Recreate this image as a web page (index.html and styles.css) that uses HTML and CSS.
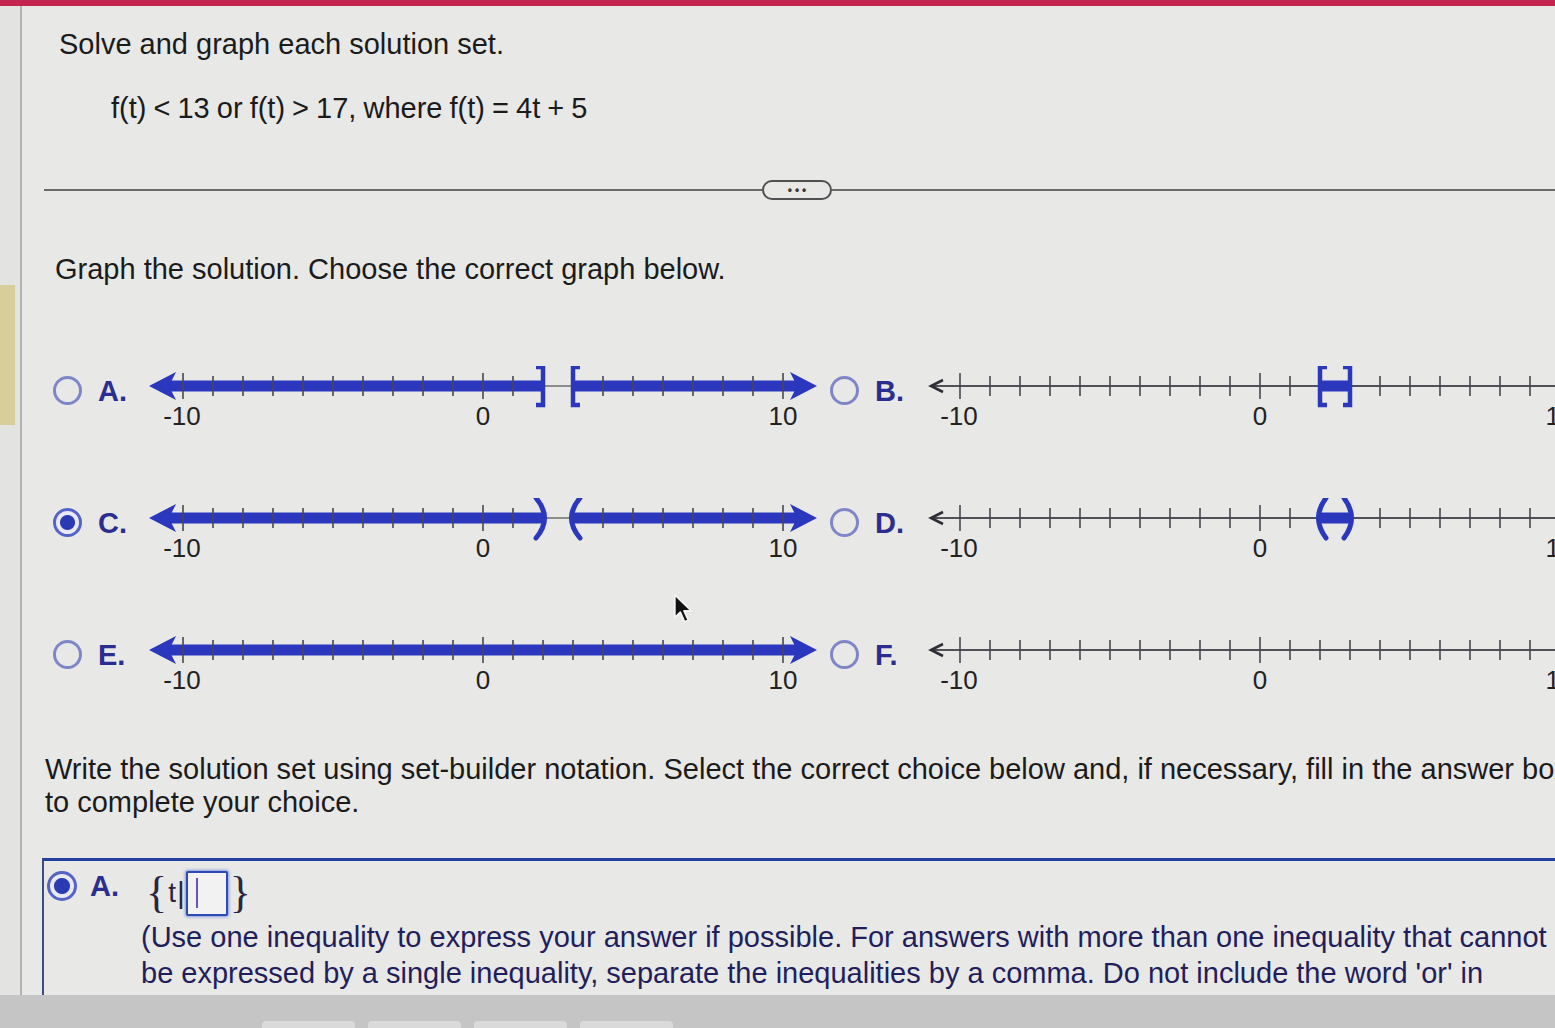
FILE: index.html
```html
<!DOCTYPE html>
<html lang="en">
<head>
<meta charset="utf-8">
<title>Solve and graph each solution set</title>
<link rel="stylesheet" href="styles.css">
</head>
<body>
<svg class="defs" aria-hidden="true">
  <defs>
    <path id="ticks" d="M38 7V33 M68 10V30 M98 10V30 M128 10V30 M158 10V30 M188 10V30 M218 10V30 M248 10V30 M278 10V30 M308 10V30 M338 7V33 M368 10V30 M398 10V30 M428 10V30 M458 10V30 M488 10V30 M518 10V30 M548 10V30 M578 10V30 M608 10V30 M638 7V33"/>
    <g id="labels">
      <text x="37" y="59" text-anchor="middle">-10</text>
      <text x="338" y="59" text-anchor="middle">0</text>
      <text x="638" y="59" text-anchor="middle">10</text>
    </g>
    <polygon id="barrow-l" points="4,20 31,6 24,20 31,34"/>
    <polygon id="barrow-r" points="672,20 645,6 652,20 645,34"/>
    <path id="thin-line" d="M9 20H690"/>
    <path id="thin-arrow" d="M21 14L9 20L21 26"/>
  </defs>
</svg>

<div class="topbar"></div>
<div class="page">
  <aside class="side"><div class="side-mark"></div></aside>
  <main class="content">
    <p class="prompt">Solve and graph each solution set.</p>
    <p class="equation">f(t) &lt; 13 or f(t) &gt; 17, where f(t) = 4t + 5</p>
    <div class="divider"><span class="rule rule-left"></span><span class="more">•••</span><span class="rule"></span></div>
    <p class="question">Graph the solution. Choose the correct graph below.</p>

    <div class="choices">
      <div class="choice">
        <span class="radio"></span><span class="letter">A.</span>
        <svg class="nl" width="700" height="64" viewBox="0 0 700 64">
          <rect class="blue" x="20" y="14.5" width="376" height="11"/>
          <path class="gap" d="M398 20H428"/>
          <rect class="blue" x="430" y="14.5" width="222" height="11"/>
          <use href="#barrow-l" class="blue"/>
          <use href="#barrow-r" class="blue"/>
          <use href="#ticks" class="tick"/>
          <path class="bracket" d="M391 1H398V39H391"/>
          <path class="bracket" d="M435 1H428V39H435"/>
          <use href="#labels" class="lbl"/>
        </svg>
      </div>
      <div class="choice">
        <span class="radio"></span><span class="letter">B.</span>
        <svg class="nl" width="700" height="64" viewBox="0 0 700 64">
          <use href="#thin-line" class="thin"/>
          <use href="#thin-arrow" class="thin-a"/>
          <use href="#ticks" class="tick"/>
          <rect class="blue" x="398" y="14.5" width="30" height="11"/>
          <path class="bracket" d="M405 1H398V39H405"/>
          <path class="bracket" d="M421 1H428V39H421"/>
          <use href="#labels" class="lbl"/>
        </svg>
      </div>
      <div class="choice">
        <span class="radio checked"></span><span class="letter">C.</span>
        <svg class="nl" width="700" height="64" viewBox="0 0 700 64">
          <rect class="blue" x="20" y="14.5" width="378" height="11"/>
          <path class="gap" d="M398 20H428"/>
          <rect class="blue" x="428" y="14.5" width="224" height="11"/>
          <use href="#barrow-l" class="blue"/>
          <use href="#barrow-r" class="blue"/>
          <use href="#ticks" class="tick"/>
          <path class="paren" d="M391 0Q408 20 391 40"/>
          <path class="paren" d="M435 0Q418 20 435 40"/>
          <use href="#labels" class="lbl"/>
        </svg>
      </div>
      <div class="choice">
        <span class="radio"></span><span class="letter">D.</span>
        <svg class="nl" width="700" height="64" viewBox="0 0 700 64">
          <use href="#thin-line" class="thin"/>
          <use href="#thin-arrow" class="thin-a"/>
          <use href="#ticks" class="tick"/>
          <rect class="blue" x="398" y="14.5" width="30" height="11"/>
          <path class="paren" d="M404 0Q389 20 404 40"/>
          <path class="paren" d="M422 0Q437 20 422 40"/>
          <use href="#labels" class="lbl"/>
        </svg>
      </div>
      <div class="choice">
        <span class="radio"></span><span class="letter">E.</span>
        <svg class="nl" width="700" height="64" viewBox="0 0 700 64">
          <rect class="blue" x="20" y="14.5" width="632" height="11"/>
          <use href="#barrow-l" class="blue"/>
          <use href="#barrow-r" class="blue"/>
          <use href="#ticks" class="tick"/>
          <use href="#labels" class="lbl"/>
        </svg>
      </div>
      <div class="choice">
        <span class="radio"></span><span class="letter">F.</span>
        <svg class="nl" width="700" height="64" viewBox="0 0 700 64">
          <use href="#thin-line" class="thin"/>
          <use href="#thin-arrow" class="thin-a"/>
          <use href="#ticks" class="tick"/>
          <use href="#labels" class="lbl"/>
        </svg>
      </div>
    </div>

    <p class="question q2">Write the solution set using set-builder notation. Select the correct choice below and, if necessary, fill in the answer box<br>to complete your choice.</p>

    <div class="answer">
      <div class="ans-row">
        <span class="radio big checked"></span>
        <span class="letter ans-letter">A.</span>
        <span class="setb"><span class="brace">{</span><span class="var">t</span><span class="bar">|</span><span class="input"><span class="caret"></span></span><span class="brace">}</span></span>
      </div>
      <p class="instr">(Use one inequality to express your answer if possible. For answers with more than one inequality that cannot<br>be expressed by a single inequality, separate the inequalities by a comma. Do not include the word 'or' in</p>
    </div>
  </main>
</div>
<div class="bottom">
  <span class="tab"></span><span class="tab"></span><span class="tab"></span><span class="tab"></span>
</div>

<svg class="pointer" width="22" height="32" viewBox="0 0 18 26" aria-hidden="true">
  <path d="M1.5 1.5V20L6 15.5L9.5 23.5L12.5 22.2L9 14.5H15Z" fill="#111" stroke="#f4f4f4" stroke-width="1.4" stroke-linejoin="round"/>
</svg>
</body>
</html>
```

FILE: styles.css
```css
html, body {
  margin: 0;
  padding: 0;
}
body {
  width: 1555px;
  height: 1028px;
  overflow: hidden;
  position: relative;
  background: #e8e8e6;
  font-family: "Liberation Sans", Arial, sans-serif;
  color: #1b1b1b;
}
.defs {
  position: absolute;
  width: 0;
  height: 0;
  overflow: hidden;
}
.topbar {
  height: 6px;
  background: #c32550;
}
.page {
  display: flex;
  height: 989px;
  overflow: hidden;
}
.side {
  flex: 0 0 20px;
  background: #e3e3e1;
  border-right: 2px solid #b3b3b3;
}
.side-mark {
  margin-top: 279px;
  width: 15px;
  height: 140px;
  background: #d7ce9c;
}
.content {
  flex: 0 0 auto;
  width: 1700px;
  padding-left: 20px;
}
p {
  margin: 0;
}
.prompt {
  margin-top: 22px;
  margin-left: 17px;
  font-size: 29px;
  line-height: 32px;
}
.equation {
  margin-top: 32px;
  margin-left: 69px;
  font-size: 29px;
  line-height: 32px;
  word-spacing: -1px;
}
.divider {
  margin-top: 56px;
  margin-left: 2px;
  display: flex;
  align-items: center;
  height: 20px;
}
.rule {
  flex: 1;
  height: 2px;
  background: #6a6a6c;
}
.rule-left {
  flex: 0 0 718px;
}
.more {
  width: 66px;
  height: 16px;
  border: 2px solid #505052;
  border-radius: 10px;
  font-size: 12px;
  font-weight: bold;
  line-height: 16px;
  text-align: center;
  letter-spacing: 3px;
  text-indent: 3px;
  color: #3c3c3c;
}
.question {
  margin-top: 53px;
  margin-left: 13px;
  font-size: 29px;
  line-height: 32px;
}
.choices {
  margin-top: 81px;
  margin-left: 11px;
  display: grid;
  grid-template-columns: 777px 777px;
  row-gap: 68px;
}
.choice {
  display: flex;
  align-items: flex-start;
  height: 64px;
}
.radio {
  flex: 0 0 auto;
  box-sizing: border-box;
  width: 29px;
  height: 29px;
  margin-top: 10px;
  border: 3px solid #7f86c8;
  border-radius: 50%;
}
.radio.checked {
  border-color: #5663c6;
  background: radial-gradient(circle, #2a3ab2 0 7px, #e9e9f4 8px);
}
.letter {
  flex: 0 0 47px;
  margin-left: 16px;
  margin-top: 9px;
  font-size: 29px;
  line-height: 32px;
  font-weight: bold;
  color: #2b2e90;
}
.nl {
  flex: 0 0 auto;
  display: block;
}
.blue {
  fill: #2b37bd;
}
.tick {
  stroke: #4a4652;
  stroke-width: 1.6;
  fill: none;
}
.thin {
  stroke: #505058;
  stroke-width: 2;
  fill: none;
}
.thin-a {
  stroke: #2c2c34;
  stroke-width: 2.6;
  fill: none;
}
.gap {
  stroke: #8b8e88;
  stroke-width: 2;
  fill: none;
}
.bracket {
  stroke: #2b37bd;
  stroke-width: 4.5;
  fill: none;
}
.paren {
  stroke: #2b37bd;
  stroke-width: 5;
  fill: none;
  stroke-linecap: round;
}
.lbl {
  font-family: "Liberation Sans", Arial, sans-serif;
  font-size: 26px;
  fill: #222;
}
.q2 {
  margin-top: 59px;
  margin-left: 3px;
  line-height: 33px;
  white-space: nowrap;
}
.answer {
  margin-top: 39px;
  border-top: 3px solid #23409e;
  border-left: 2px solid #3e4c86;
  padding: 9px 0 0 3px;
  height: 300px;
}
.ans-row {
  display: flex;
  align-items: flex-start;
  height: 46px;
}
.radio.big {
  width: 30px;
  height: 30px;
  margin-top: 1px;
}
.radio.big.checked {
  background: radial-gradient(circle, #2a3ab2 0 7.5px, #e9e9f4 8.5px);
}
.ans-letter {
  flex: 0 0 auto;
  margin-left: 13px;
  margin-top: 0;
}
.setb {
  margin-left: 27px;
  display: flex;
  align-items: center;
  height: 46px;
  color: #2a2540;
}
.brace {
  font-family: "Liberation Serif", "Times New Roman", serif;
  font-size: 44px;
  line-height: 46px;
  font-weight: normal;
}
.var {
  font-size: 28px;
  margin-left: 1px;
}
.bar {
  font-size: 30px;
  margin-left: 1px;
}
.input {
  box-sizing: border-box;
  width: 42px;
  height: 45px;
  margin: 0 2px 0 1px;
  border: 2px solid #2c4ab4;
  border-radius: 2px;
  box-shadow: 0 0 3px 1px #8597e0;
  background: #f2f2f2;
  display: flex;
  align-items: center;
  padding-left: 8px;
}
.caret {
  width: 2px;
  height: 30px;
  background: #6c52b2;
}
.instr {
  margin-top: 3px;
  margin-left: 94px;
  font-size: 29px;
  line-height: 36px;
  color: #221e5c;
  white-space: nowrap;
}
.bottom {
  height: 33px;
  background: #c5c5c5;
  display: flex;
  align-items: flex-end;
  gap: 13px;
  padding-left: 262px;
}
.tab {
  width: 93px;
  height: 7px;
  background: #dadada;
  border-radius: 4px 4px 0 0;
}
.pointer {
  position: absolute;
  left: 673px;
  top: 593px;
}
```
